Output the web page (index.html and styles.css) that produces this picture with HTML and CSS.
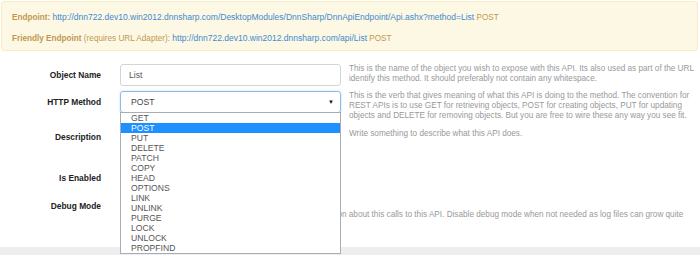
FILE: index.html
```html
<!DOCTYPE html>
<html>
<head>
<meta charset="utf-8">
<link rel="stylesheet" href="styles.css">
</head>
<body>
<div class="alert">
  <p class="alert-line"><b>Endpoint:</b> <a href="#">http://dnn722.dev10.win2012.dnnsharp.com/DesktopModules/DnnSharp/DnnApiEndpoint/Api.ashx?method=List</a> POST</p>
  <p class="alert-line"><b>Friendly Endpoint</b> (requires URL Adapter): <a href="#">http://dnn722.dev10.win2012.dnnsharp.com/api/List</a> POST</p>
</div>

<div class="form">
  <div class="row row-name">
    <label class="lbl">Object Name</label>
    <div class="ctl"><div class="input">List</div></div>
    <p class="help">This is the name of the object you wish to expose with this API. Its also used as part of the URL identify this method. It should preferably not contain any whitespace.</p>
  </div>

  <div class="row row-method">
    <label class="lbl">HTTP Method</label>
    <div class="ctl">
      <div class="select-wrap">
        <div class="select"><span>POST</span><span class="arrow">&#9660;</span></div>
        <ul class="options">
          <li>GET</li>
          <li class="sel">POST</li>
          <li>PUT</li>
          <li>DELETE</li>
          <li>PATCH</li>
          <li>COPY</li>
          <li>HEAD</li>
          <li>OPTIONS</li>
          <li>LINK</li>
          <li>UNLINK</li>
          <li>PURGE</li>
          <li>LOCK</li>
          <li>UNLOCK</li>
          <li>PROPFIND</li>
        </ul>
      </div>
    </div>
    <p class="help">This is the verb that gives meaning of what this API is doing to the method. The convention for REST APIs is to use GET for retrieving objects, POST for creating objects, PUT for updating objects and DELETE for removing objects. But you are free to wire these any way you see fit.</p>
  </div>

  <div class="row row-desc">
    <label class="lbl">Description</label>
    <div class="ctl"></div>
    <p class="help">Write something to describe what this API does.</p>
  </div>

  <div class="row row-enabled">
    <label class="lbl">Is Enabled</label>
    <div class="ctl"></div>
    <p class="help"></p>
  </div>

  <div class="row row-debug">
    <label class="lbl">Debug Mode</label>
    <p class="help help-wide">Enable this to log more information about this calls to this API. Disable debug mode when not needed as log files can grow quite large.</p>
  </div>
</div>

<div class="footer-band"></div>
</body>
</html>
```

FILE: styles.css
```css
* { box-sizing: border-box; }

html, body {
  margin: 0;
  padding: 0;
  background: #fff;
  font-family: "Liberation Sans", Arial, sans-serif;
  font-size: 8.4px;
  color: #333;
  overflow: hidden;
  height: 255px;
}

.alert {
  margin: 1px 2px 0 1px;
  height: 50px;
  background: #fcf8e3;
  border: 1px solid #f6ecc9;
  border-radius: 3px;
  color: #c09853;
  padding: 10px 0 0 10px;
  font-size: 8.2px;
}

.alert-line {
  margin: 0;
  line-height: 10px;
  white-space: nowrap;
}

.alert-line + .alert-line { margin-top: 10px; }

.alert a {
  color: #3f8ad0;
  text-decoration: none;
  font-size: 8.5px;
}

.form {
  position: relative;
}

.row {
  display: grid;
  grid-template-columns: 120px 221px 1fr;
}

.lbl {
  font-weight: bold;
  color: #222;
  text-align: right;
  padding-right: 19px;
  line-height: 10px;
}

.ctl { position: relative; }

.help {
  margin: 0;
  padding-left: 8px;
  padding-right: 0;
  color: #999;
  line-height: 10px;
  font-size: 8.2px;
}

.row-name { margin-top: 13px; height: 22px; }
.row-name .lbl { padding-top: 6px; }

.input {
  height: 22px;
  border: 1px solid #d4d4d4;
  border-radius: 3px;
  padding: 0 8px;
  line-height: 20px;
  color: #555;
  font-size: 8.6px;
}

.row-method { margin-top: 5px; height: 22px; }
.row-method .lbl { padding-top: 6px; }

.select-wrap { position: relative; z-index: 2; }

.select {
  height: 22px;
  border: 1px solid #8dbbe6;
  border-radius: 3px;
  box-shadow: 0 0 2px rgba(102, 175, 233, 0.5);
  padding: 0 6px 0 10px;
  line-height: 20px;
  color: #444;
  font-size: 8.6px;
  display: flex;
  justify-content: space-between;
}

.arrow {
  font-size: 6px;
  color: #111;
}

.options {
  position: absolute;
  left: 0;
  top: 21px;
  width: 221px;
  margin: 0;
  padding: 0;
  list-style: none;
  background: #fff;
  border: 1px solid #a5adb9;
}

.options li {
  height: 10px;
  line-height: 10px;
  padding-left: 10px;
  color: #555;
  font-size: 8.6px;
}

.options li.sel {
  background: #1e90ff;
  color: #fff;
}

.row-desc { margin-top: 16px; height: 30px; }
.row-desc .lbl { padding-top: 3px; }

.row-enabled { margin-top: 11px; height: 20px; }
.row-enabled .lbl { padding-top: 3px; }

.row-debug { margin-top: 9px; height: 30px; }
.row-debug .lbl { padding-top: 2px; }

.help-wide {
  grid-column: 2 / 4;
  padding-left: 100px;
  padding-right: 4px;
  padding-top: 11px;
}

.footer-band {
  position: absolute;
  left: 0;
  right: 0;
  top: 247px;
  height: 8px;
  background: #eee;
  z-index: 0;
}
```
